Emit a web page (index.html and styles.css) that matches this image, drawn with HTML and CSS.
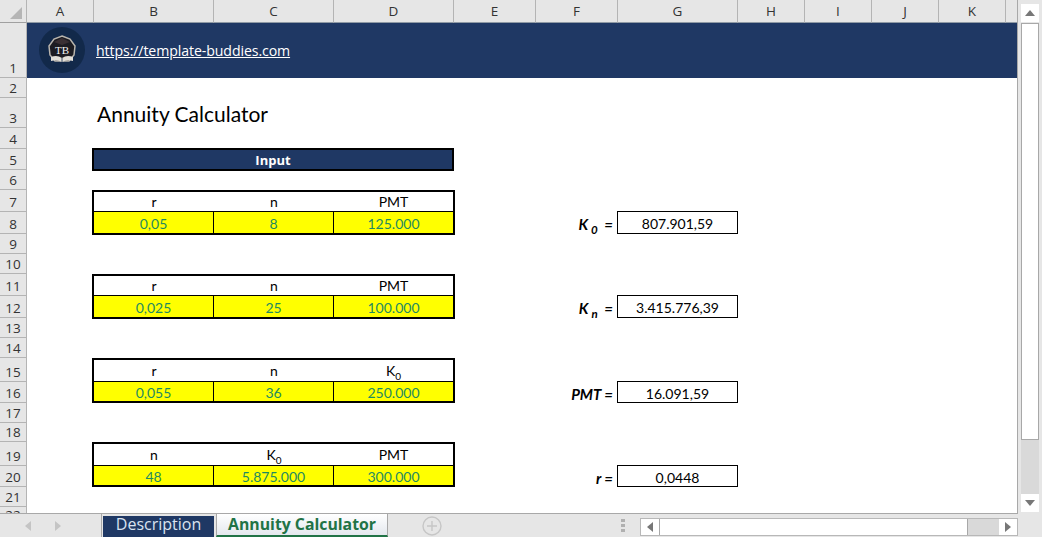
FILE: index.html
```html
<!DOCTYPE html>
<html lang="en">
<head>
<meta charset="utf-8">
<title>Annuity Calculator</title>
<link rel="stylesheet" href="styles.css">
</head>
<body>
<div class="window">
  <div class="workspace">
    <div class="sheet">
      <div class="corner"><svg width="27" height="23" viewBox="0 0 27 23"><path d="M22 7V19H10Z" fill="#b5b5b5"/></svg></div>
      <div class="ch">A</div><div class="ch">B</div><div class="ch">C</div><div class="ch">D</div><div class="ch">E</div><div class="ch">F</div><div class="ch">G</div><div class="ch">H</div><div class="ch">I</div><div class="ch">J</div><div class="ch">K</div><div class="ch ch-end"></div>

      <div class="rh">1</div><div class="rh">2</div><div class="rh">3</div><div class="rh">4</div><div class="rh">5</div><div class="rh">6</div><div class="rh">7</div><div class="rh">8</div><div class="rh">9</div><div class="rh">10</div><div class="rh">11</div><div class="rh">12</div><div class="rh">13</div><div class="rh">14</div><div class="rh">15</div><div class="rh">16</div><div class="rh">17</div><div class="rh">18</div><div class="rh">19</div><div class="rh">20</div><div class="rh">21</div><div class="rh">22</div>

      <div class="banner">
        <svg class="logo" width="46" height="46" viewBox="0 0 46 46">
          <circle cx="23" cy="23" r="23" fill="#12294a"/>
          <path d="M23 9 L31 12 L36 19 L35 28 L30 34 H16 L11 28 L10 19 L15 12Z" fill="#1c1c22" stroke="#b9b5ad" stroke-width="1.5"/>
          <path d="M15 15 L23 11 L31 15 L23 18Z" fill="#3a3034"/>
          <text x="23" y="27" class="logo-text">TB</text>
          <path d="M12 30 Q18 27.500 23 31 Q28 27.500 34 30 V34 Q28 32 23 35 Q18 32 12 34Z" fill="#e2dfd8"/>
          <path d="M23 31V35" stroke="#12294a" stroke-width="0.8"/>
        </svg>
        <a class="link" href="#">https://template-buddies.com</a>
      </div>

      <div class="title">Annuity Calculator</div>
      <div class="input-head">Input</div>

      <div class="block b7">
        <div class="hd">r</div><div class="hd">n</div><div class="hd">PMT</div>
        <div class="val">0,05</div><div class="val">8</div><div class="val">125.000</div>
      </div>
      <div class="block b11">
        <div class="hd">r</div><div class="hd">n</div><div class="hd">PMT</div>
        <div class="val">0,025</div><div class="val">25</div><div class="val">100.000</div>
      </div>
      <div class="block b15">
        <div class="hd">r</div><div class="hd">n</div><div class="hd"><span>K<sub>0</sub></span></div>
        <div class="val">0,055</div><div class="val">36</div><div class="val">250.000</div>
      </div>
      <div class="block b19">
        <div class="hd">n</div><div class="hd"><span>K<sub>0</sub></span></div><div class="hd">PMT</div>
        <div class="val">48</div><div class="val">5.875.000</div><div class="val">300.000</div>
      </div>

      <div class="lbl r8"><span>K<sub>0</sub>&nbsp; =</span></div><div class="res r8">807.901,59</div>
      <div class="lbl r12"><span>K<sub>n</sub>&nbsp; =</span></div><div class="res r12">3.415.776,39</div>
      <div class="lbl r16"><span>PMT =</span></div><div class="res r16">16.091,59</div>
      <div class="lbl r20"><span>r =</span></div><div class="res r20">0,0448</div>
    </div>

    <div class="vscroll">
      <div class="sbtn v-btn"><svg width="10" height="6" viewBox="0 0 10 6"><path d="M5 0L10 6H0Z" fill="#777"/></svg></div>
      <div class="v-thumb"></div>
      <div class="v-track"></div>
      <div class="sbtn v-btn"><svg width="10" height="6" viewBox="0 0 10 6"><path d="M0 0H10L5 6Z" fill="#777"/></svg></div>
    </div>
  </div>

  <div class="tabbar">
    <div class="nav">
      <svg width="6" height="10" viewBox="0 0 6 10"><path d="M6 0V10L0 5Z" fill="#c4c4c4"/></svg>
      <svg width="6" height="10" viewBox="0 0 6 10"><path d="M0 0V10L6 5Z" fill="#c4c4c4"/></svg>
    </div>
    <div class="tab tab-desc">Description</div>
    <div class="tab tab-active">Annuity Calculator</div>
    <div class="add"><svg width="20" height="20" viewBox="0 0 20 20"><circle cx="10" cy="10" r="9" fill="none" stroke="#c6c6c6" stroke-width="1.4"/><path d="M10 5V15M5 10H15" stroke="#c6c6c6" stroke-width="1.4"/></svg></div>
    <div class="grip"><i></i><i></i><i></i></div>
    <div class="hscroll">
      <div class="sbtn h-btn"><svg width="6" height="10" viewBox="0 0 6 10"><path d="M6 0V10L0 5Z" fill="#777"/></svg></div>
      <div class="h-thumb"></div>
      <div class="h-track"></div>
      <div class="sbtn h-btn"><svg width="6" height="10" viewBox="0 0 6 10"><path d="M0 0V10L6 5Z" fill="#777"/></svg></div>
    </div>
  </div>
</div>
</body>
</html>
```
FILE: styles.css
```css
* { box-sizing: border-box; }
html, body { margin: 0; padding: 0; }
body { width: 1042px; height: 537px; overflow: hidden; background: #e6e6e6; font-family: "Lato", "Liberation Sans", sans-serif; color: #000; }

.window { display: flex; flex-direction: column; width: 1042px; height: 537px; }
.workspace { display: flex; height: 514px; }

.sheet {
  width: 1018px;
  height: 514px;
  overflow: hidden;
  display: grid;
  grid-template-columns: 27px 67px 120px 120px 120px 82px 82px 120px 67px 67px 67px 67px 12px;
  grid-template-rows: 23px 55px 20px 30px 21px 21px 20px 22px 22px 20px 20px 22px 22px 20px 20px 24px 21px 20px 19px 24px 21px 20px 18px;
  background: #fff;
  border-right: 1px solid #a8a8a8;
  border-bottom: 1px solid #a8a8a8;
}

.corner { grid-column: 1; grid-row: 1; background: #e6e6e6; border-right: 1px solid #b4b4b4; border-bottom: 1px solid #a0a0a0; height: 23px; }
.corner svg { display: block; }

.ch { grid-row: 1; background: #e6e6e6; border-right: 1px solid #b4b4b4; border-bottom: 1px solid #8f9aa5; display: flex; align-items: center; justify-content: center; font: 13.5px "Open Sans", sans-serif; color: #333; }
.ch-end { border-right: 0; }

.rh { grid-column: 1; background: #e6e6e6; border-right: 1px solid #b4b4b4; border-bottom: 1px solid #b4b4b4; display: flex; align-items: flex-end; justify-content: center; font: 13.5px/17px "Open Sans", sans-serif; color: #333; }

.banner { grid-column: 2 / -1; grid-row: 2; background: #1f3864; display: flex; align-items: center; gap: 11px; padding-left: 12px; padding-bottom: 1px; }
.logo { display: block; }
.logo-text { font: 400 11px "Liberation Serif", serif; fill: #f2f2f2; text-anchor: middle; }
.link { color: #fff; font: 14.15px "Open Sans", sans-serif; letter-spacing: -0.1px; text-decoration: underline; }

.title { grid-column: 3 / 6; grid-row: 4; font: 21px/32px "Lato", sans-serif; padding-left: 3px; white-space: nowrap; }

.input-head { grid-column: 3 / 6; grid-row: 6; margin: -1px 0 -1px -2px; background: #1f3864; border: 2px solid #000; color: #fff; font: 700 13px "Open Sans", sans-serif; display: flex; align-items: center; justify-content: center; }

.block { grid-column: 3 / 6; margin: 0 -1px -1px -2px; border: 2px solid #000; display: grid; grid-template-columns: 120px 120px 1fr; grid-template-rows: 20px 1fr; background: #fff; }
.b7 { grid-row: 8 / 10; }
.b11 { grid-row: 12 / 14; }
.b15 { grid-row: 16 / 18; margin-bottom: 0; grid-template-rows: 22px 1fr; }
.b19 { grid-row: 20 / 22; margin-bottom: 0; grid-template-rows: 22px 1fr; }

.hd { display: flex; align-items: center; justify-content: center; font: 14px "Lato", sans-serif; border-bottom: 1px solid #000; }
.hd sub { font-size: 10px; line-height: 0; }
.val { display: flex; align-items: center; justify-content: center; padding-top: 2px; background: #ff0; color: #1f8a60; font: 14px "Lato", sans-serif; border-right: 1px solid #000; }
.val:last-child { border-right: 0; }

.lbl { grid-column: 7; margin-right: 5px; padding-top: 2px; display: flex; align-items: center; justify-content: flex-end; font: italic 700 15px "Lato", sans-serif; white-space: pre; }
.lbl sub { font-size: 11.5px; line-height: 0; margin-left: 3px; }
.res { grid-column: 8; margin: -1px 0 0 -1px; padding-top: 2px; border: 1px solid #000; background: #fff; display: flex; align-items: center; justify-content: center; font: 14px "Lato", sans-serif; }
.r8 { grid-row: 9; }
.r12 { grid-row: 13; }
.r16 { grid-row: 17; }
.r20 { grid-row: 21; }

.vscroll { width: 24px; padding: 4px 3px 0 3px; display: flex; flex-direction: column; }
.sbtn { background: #fff; display: flex; align-items: center; justify-content: center; }
.v-btn { height: 18px; flex: none; }
.v-thumb { height: 417px; margin-top: 1px; background: #fff; border: 1px solid #a8a8a8; }
.v-track { flex: 0 0 54px; background: #d9d9d9; }

.tabbar { display: flex; align-items: flex-end; height: 23px; }
.nav { width: 102px; height: 23px; padding: 0 0 0 25px; display: flex; align-items: center; gap: 24px; border-right: 1px solid #a8a8a8; }
.tab { height: 21px; display: flex; align-items: center; justify-content: center; white-space: nowrap; font-family: "Open Sans", sans-serif; }
.tab-desc { width: 111px; margin-left: 1px; padding-bottom: 6px; background: #1f3864; color: #d9e2f0; font-size: 16px; }
.tab-active { width: 172px; height: 23px; margin-left: 2px; padding-bottom: 1px; background: linear-gradient(#fff, #e4e8ee); color: #217346; font-weight: 700; font-size: 15.8px; border-left: 1px solid #a8a8a8; border-right: 1px solid #a8a8a8; border-bottom: 2px solid #217346; }
.add { margin-left: 34px; height: 23px; display: flex; align-items: center; }
.grip { margin-left: 179px; width: 4px; height: 23px; display: flex; flex-direction: column; justify-content: center; gap: 2px; }
.grip i { display: block; width: 4px; height: 3px; background: #b0b0b0; }
.hscroll { margin-left: 15px; margin-bottom: 1px; width: 378px; height: 18px; display: flex; background: #d9d9d9; border: 1px solid #b8b8b8; }
.h-btn { width: 18px; flex: none; }
.h-thumb { width: 309px; background: #fff; border-left: 1px solid #a8a8a8; border-right: 1px solid #a8a8a8; }
.h-track { flex: 1; }
```
